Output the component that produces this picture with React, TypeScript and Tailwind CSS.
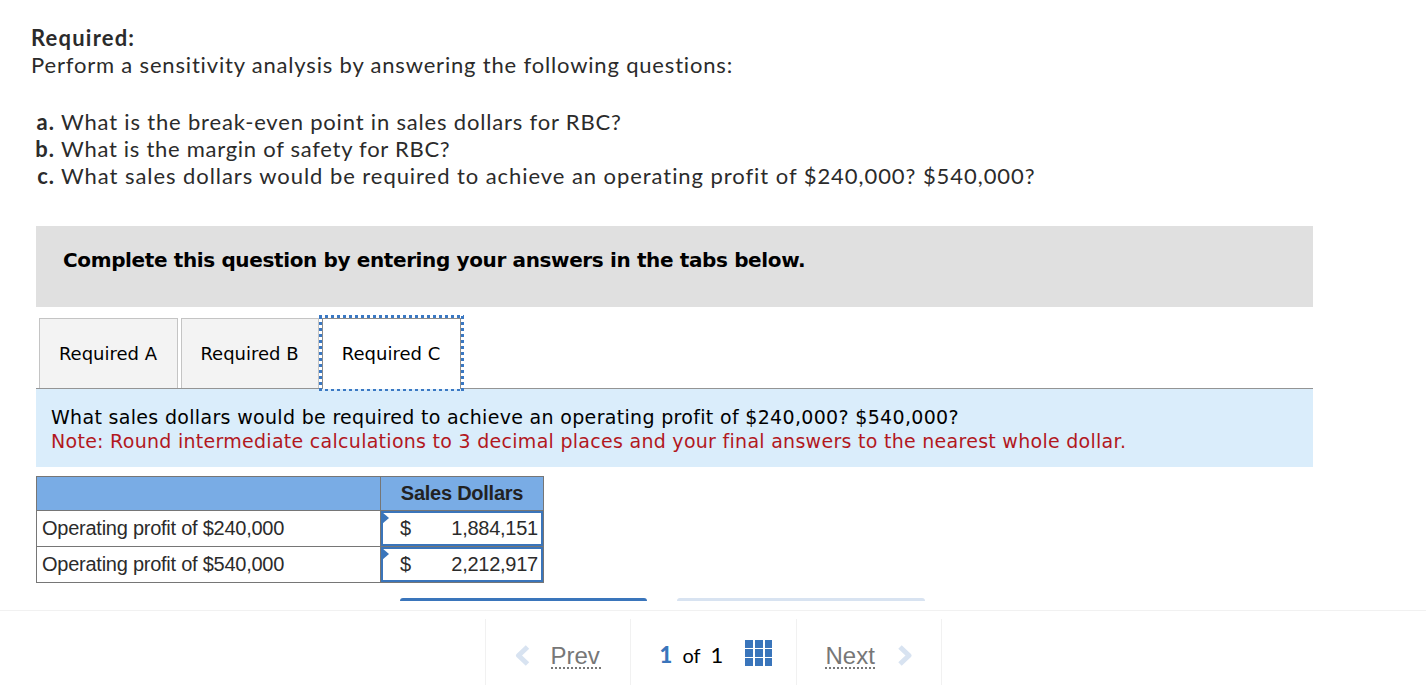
import React from 'react';
import clsx from 'clsx';

const questions = [
  { letter: 'a.', text: 'What is the break-even point in sales dollars for RBC?', textClass: 'tracking-[0.82px]' },
  { letter: 'b.', text: 'What is the margin of safety for RBC?', textClass: 'tracking-[0.72px]' },
  {
    letter: 'c.',
    text: 'What sales dollars would be required to achieve an operating profit of $240,000? $540,000?',
    textClass: 'tracking-[0.94px]'
  }
];

const tabs = [
  { name: 'Required A', widthClass: 'w-[139px]' },
  { name: 'Required B', widthClass: 'w-[138px]' },
  { name: 'Required C', widthClass: 'w-[139px]' }
];

const rows = [
  { label: 'Operating profit of $240,000', value: '1,884,151' },
  { label: 'Operating profit of $540,000', value: '2,212,917' }
];

const Instructions: React.FC = () => (
  <section className="h-[201px] pt-6 pl-[31px] font-['Lato',sans-serif] text-[22px] leading-[27px] text-[#2b2b2b]">
    <h2 className="font-bold tracking-[1.2px] whitespace-nowrap">Required:</h2>
    <p className="tracking-[0.82px] whitespace-nowrap">
      Perform a sensitivity analysis by answering the following questions:
    </p>
    <ol className="mt-[30px]">
      {questions.map((q) => (
        <li key={q.letter} className="flex whitespace-nowrap">
          <span className="w-[30px] pr-[6px] text-right font-bold tracking-[1px]">{q.letter}</span>
          <span className={q.textClass}>{q.text}</span>
        </li>
      ))}
    </ol>
  </section>
);

const TabBar: React.FC<{ active: string }> = ({ active }) => (
  <div className="flex h-[71px] items-start gap-[3px] border-b border-[#949494] pl-[3px]">
    {tabs.map((tab) => (
      <button
        key={tab.name}
        className={clsx(
          'border border-b-0 pr-px text-[18px] whitespace-nowrap text-black',
          tab.widthClass,
          tab.name === active
            ? 'relative h-[71px] border-[#8c8c8c] bg-white pb-px'
            : 'h-[70px] border-[#c4c4c4] bg-[#f3f3f3]'
        )}
      >
        {tab.name}
        {tab.name === active && (
          <svg className="absolute -top-[4px] -left-[4px]" width="145" height="76" fill="none" stroke="#3a78c3" strokeWidth="3" strokeDasharray="3 3">
            <path d="M0 1.5H145M1.5 1V76M143.5 1V76" />
            <path d="M0 75H145" strokeWidth="2" />
          </svg>
        )}
      </button>
    ))}
  </div>
);

const AnswerTable: React.FC = () => (
  <table className="mt-[9px] w-[508px] table-fixed border-collapse font-['Liberation_Sans',Arial,sans-serif] text-[20px] leading-[24px] tracking-[-0.25px] text-[#2b2b2b]">
    <thead>
      <tr className="h-[34px] bg-[#79ace5]">
        <th className="w-[344px] border border-[#767676]" />
        <th className="border border-[#767676] p-0 pb-[2px] font-bold text-[#222]">Sales Dollars</th>
      </tr>
    </thead>
    <tbody>
      {rows.map((row) => (
        <tr key={row.label} className="h-[36px]">
          <td className="border border-[#767676] p-0 pb-[2px] pl-[5px] whitespace-nowrap">{row.label}</td>
          <td className="border border-[#767676] p-0">
            <div className="relative flex h-[35px] items-center justify-between border-2 border-[#3a75bb] pr-[3px] pb-[2px] pl-[17px]">
              <svg className="absolute -top-px -left-px" width="7" height="12" viewBox="0 0 7 12">
                <path d="M0 0L7 6L0 12Z" fill="#3a75bb" />
              </svg>
              <span>$</span>
              <span>{row.value}</span>
            </div>
          </td>
        </tr>
      ))}
    </tbody>
  </table>
);

const Chevron: React.FC<{ d: string }> = ({ d }) => (
  <svg width="16" height="22" viewBox="0 0 16 22" fill="none" stroke="#d8e3f1" strokeWidth="5" strokeLinejoin="round">
    <path d={d} />
  </svg>
);

const Pager: React.FC = () => (
  <nav className="flex h-[78px] justify-center border-t border-[#f1f1f1] pt-2 font-['Liberation_Sans',Arial,sans-serif]">
    <div className="flex h-[66px] w-[457px] border-x border-[#f1f1f1]">
      <div className="flex w-[145px] items-center border-r border-[#f1f1f1] pt-[8px] pl-[29px]">
        <Chevron d="M12.5 2L3.5 10.5L12.5 19" />
        <a className="ml-[20px] border-b-2 border-dotted border-[#777] pt-px pr-px text-[24px] leading-[22px] text-[#777]">Prev</a>
      </div>
      <div className="flex w-[166px] items-center border-r border-[#f1f1f1] pl-[29px]">
        <div className="flex items-baseline pt-[5px] font-['Lato',sans-serif] text-[20px] text-black">
          <span className="w-[23px] text-[22px] font-black text-[#3a75bb]">1</span>
          <span className="w-[28px]">of</span>
          <span className="text-[22px]">1</span>
        </div>
        <div className="mr-[24px] ml-auto grid grid-cols-[8px_8px_7px] gap-x-[2px] gap-y-px pt-[2px]">
          {Array.from({ length: 9 }, (_, i) => (
            <span key={i} className="h-[8px] bg-[#3a75bb]" />
          ))}
        </div>
      </div>
      <div className="flex flex-1 items-center pt-[8px] pl-[28px]">
        <a className="border-b-2 border-dotted border-[#777] pt-px pl-px text-[24px] leading-[22px] text-[#777]">Next</a>
        <span className="ml-[21px] flex">
          <Chevron d="M4 2L13 10.5L4 19" />
        </span>
      </div>
    </div>
  </nav>
);

const App: React.FC = () => {
  return (
    <div className="flex h-[688px] w-[1426px] flex-col overflow-hidden bg-white font-['DejaVu_Sans',Verdana,sans-serif]">
      <Instructions />
      <main className="mt-[25px] ml-[36px] flex w-[1277px] flex-1 flex-col items-start">
        <div className="h-[81px] w-full bg-[#e0e0e0] pt-[21px] pl-[27px] text-[20px] leading-[26px] font-bold tracking-[-0.37px] whitespace-nowrap text-black">
          Complete this question by entering your answers in the tabs below.
        </div>
        <div className="mt-[11px] w-full">
          <TabBar active="Required C" />
          <div className="h-[78px] bg-[#daedfb] pt-[16px] pl-[15px] text-[19px] leading-[24px] whitespace-nowrap text-black">
            <p className="tracking-[0.32px]">
              What sales dollars would be required to achieve an operating profit of $240,000? $540,000?
            </p>
            <p className="tracking-[0.28px] text-[#b2181e]">
              Note: Round intermediate calculations to 3 decimal places and your final answers to the nearest whole dollar.
            </p>
          </div>
        </div>
        <AnswerTable />
        <div className="mt-auto mb-[9px] ml-[364px] flex gap-[30px]">
          <div className="h-[3px] w-[247px] rounded-t-[3px] bg-[#3a75bb]" />
          <div className="h-[3px] w-[248px] rounded-t-[3px] bg-[#d8e3f1]" />
        </div>
      </main>
      <Pager />
    </div>
  );
};

export default App;
